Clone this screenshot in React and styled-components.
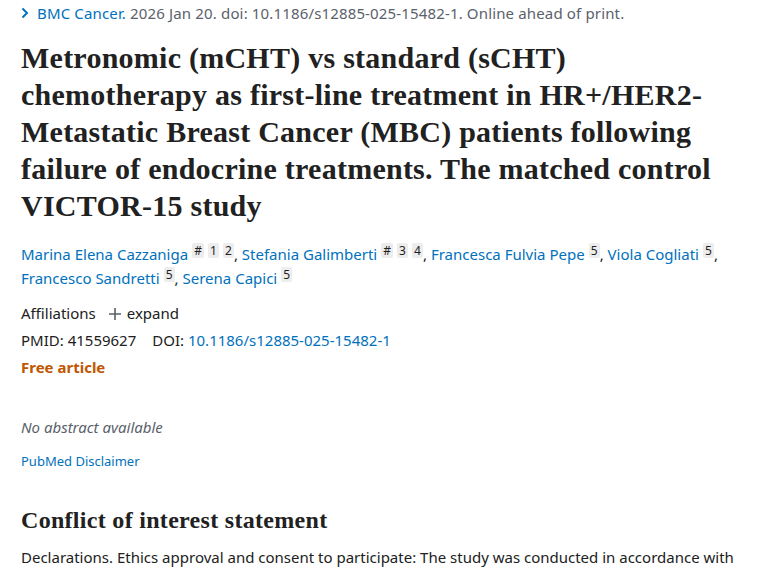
import React from 'react';
import styled, { createGlobalStyle } from 'styled-components';

const GlobalStyle = createGlobalStyle`
  body {
    margin: 0;
    background: #ffffff;
    font-family: "Noto Sans", "Open Sans", sans-serif;
    color: #212121;
  }
`

const Page = styled.main`
  padding: 0 20px 0 21px;
`
const Citation = styled.div`
  display: flex;
  align-items: center;
  gap: 8px;
  padding-top: 2px;
  height: 22px;
  font-size: 15px;
  letter-spacing: 0.15px;
  color: #5b616b;
  white-space: nowrap;
`
const Journal = styled.span`
  color: #0071bc;
`
const Title = styled.h1`
  margin: 15px 0 0;
  font-family: "Liberation Serif", serif;
  font-weight: 700;
  font-size: 30px;
  letter-spacing: 0.25px;
  line-height: 37px;
  color: #212121;
`
const Authors = styled.div`
  margin-top: 18px;
  font-size: 15px;
  line-height: 24px;
  color: #212121;
`
const Author = styled.a`
  color: #0071bc;
  text-decoration: none;
`
const Sup = styled.sup`
  display: inline-block;
  vertical-align: 5px;
  margin-left: 4px;
  padding: 1px 2px 0;
  min-width: 7px;
  text-align: center;
  font-size: 12px;
  line-height: 14px;
  background: #ededed;
  border-radius: 2px;
  color: #212121;
`
const Line = styled.div`
  margin-top: ${p => p.$top || 0}px;
  font-size: 15px;
  line-height: 27px;
  display: flex;
  align-items: center;
  gap: ${p => p.$gap || 0}px;
`
const Expand = styled.span`
  display: inline-flex;
  align-items: center;
  gap: 5px;
`
const Link = styled.a`
  color: #0071bc;
  text-decoration: none;
`
const Free = styled.span`
  color: #c05600;
  font-weight: 700;
`
const NoAbstract = styled.p`
  margin: 34px 0 0;
  font-size: 15px;
  line-height: 24px;
  font-style: italic;
  color: #5b616b;
`
const Disclaimer = styled.a`
  display: block;
  margin-top: 12px;
  font-size: 13px;
  line-height: 20px;
  color: #0071bc;
  text-decoration: none;
`
const SectionTitle = styled.h2`
  margin: 34px 0 0;
  font-family: "Liberation Serif", serif;
  font-weight: 700;
  font-size: 24px;
  letter-spacing: 0.3px;
  line-height: 30px;
  color: #212121;
`
const Body = styled.p`
  margin: 10px 0 0;
  font-size: 15px;
  line-height: 24px;
  color: #212121;
  white-space: nowrap;
`

function Chevron() {
  return (
    <svg width="8" height="12" viewBox="0 0 8 12">
      <path d="M1.5 1.5 L6 6 L1.5 10.5" fill="none" stroke="#0071bc" strokeWidth="2" />
    </svg>
  );
}

function Plus() {
  return (
    <svg width="14" height="14" viewBox="0 0 14 14">
      <path d="M7 1 V13 M1 7 H13" stroke="#5b616b" strokeWidth="1.6" />
    </svg>
  );
}

function App() {
  return (
    <Page>
      <GlobalStyle />
      <Citation>
        <Chevron />
        <span><Journal>BMC Cancer.</Journal> 2026 Jan 20. doi: 10.1186/s12885-025-15482-1. Online ahead of print.</span>
      </Citation>
      <Title>
        Metronomic (mCHT) vs standard (sCHT)<br />
        chemotherapy as first-line treatment in HR+/HER2-<br />
        Metastatic Breast Cancer (MBC) patients following<br />
        failure of endocrine treatments. The matched control<br />
        VICTOR-15 study
      </Title>
      <Authors>
        <Author>Marina Elena Cazzaniga</Author><Sup>#</Sup><Sup>1</Sup><Sup>2</Sup>,{' '}
        <Author>Stefania Galimberti</Author><Sup>#</Sup><Sup>3</Sup><Sup>4</Sup>,{' '}
        <Author>Francesca Fulvia Pepe</Author><Sup>5</Sup>,{' '}
        <Author>Viola Cogliati</Author><Sup>5</Sup>,<br />
        <Author>Francesco Sandretti</Author><Sup>5</Sup>,{' '}
        <Author>Serena Capici</Author><Sup>5</Sup>
      </Authors>
      <Line $top={10} $gap={12}>
        <span>Affiliations</span>
        <Expand><Plus />expand</Expand>
      </Line>
      <Line $gap={16}>
        <span>PMID: 41559627</span>
        <span>DOI: <Link>10.1186/s12885-025-15482-1</Link></span>
      </Line>
      <Line>
        <Free>Free article</Free>
      </Line>
      <NoAbstract>No abstract available</NoAbstract>
      <Disclaimer>PubMed Disclaimer</Disclaimer>
      <SectionTitle>Conflict of interest statement</SectionTitle>
      <Body>Declarations. Ethics approval and consent to participate: The study was conducted in accordance with</Body>
    </Page>
  );
}

export default App;
